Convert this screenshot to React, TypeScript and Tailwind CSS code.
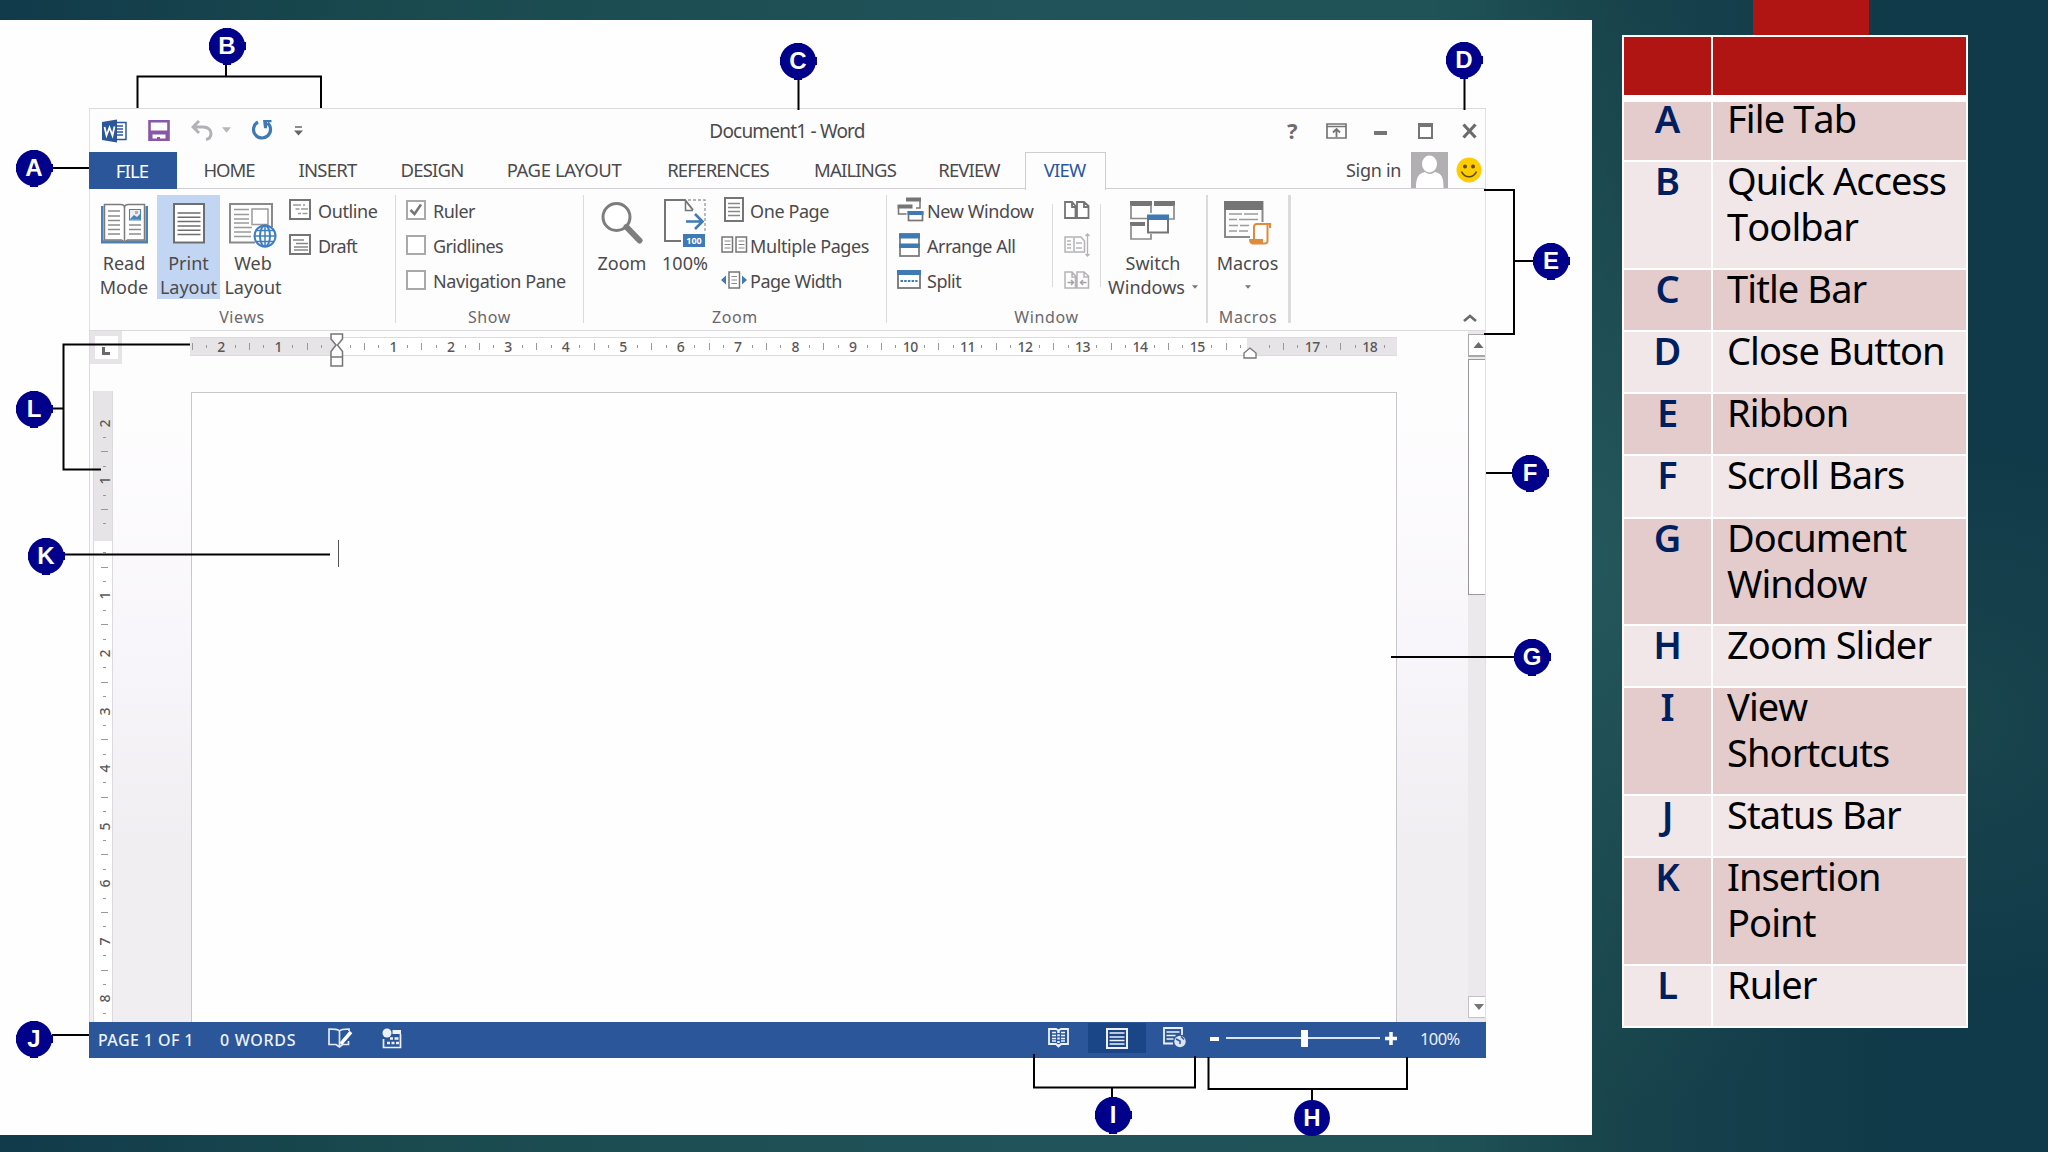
import type { ReactNode } from 'react'

const legend = [
    { letter: 'A', lines: ['File Tab'], height: 'h-[60px]' },
    { letter: 'B', lines: ['Quick Access', 'Toolbar'], height: 'h-[108px]' },
    { letter: 'C', lines: ['Title Bar'], height: 'h-[62px]' },
    { letter: 'D', lines: ['Close Button'], height: 'h-[62px]' },
    { letter: 'E', lines: ['Ribbon'], height: 'h-[62px]' },
    { letter: 'F', lines: ['Scroll Bars'], height: 'h-[63px]' },
    { letter: 'G', lines: ['Document', 'Window'], height: 'h-[107px]' },
    { letter: 'H', lines: ['Zoom Slider'], height: 'h-[62px]' },
    { letter: 'I', lines: ['View', 'Shortcuts'], height: 'h-[108px]' },
    { letter: 'J', lines: ['Status Bar'], height: 'h-[62px]' },
    { letter: 'K', lines: ['Insertion', 'Point'], height: 'h-[108px]' },
    { letter: 'L', lines: ['Ruler'], height: 'h-[62px]' },
]

const badges = [
    { letter: 'A', x: 34, y: 168 },
    { letter: 'B', x: 227, y: 46 },
    { letter: 'C', x: 798, y: 61 },
    { letter: 'D', x: 1464, y: 60 },
    { letter: 'E', x: 1551, y: 261 },
    { letter: 'F', x: 1530, y: 473 },
    { letter: 'G', x: 1532, y: 657 },
    { letter: 'H', x: 1312, y: 1118 },
    { letter: 'I', x: 1113, y: 1115 },
    { letter: 'J', x: 34, y: 1039 },
    { letter: 'K', x: 46, y: 556 },
    { letter: 'L', x: 34, y: 409 },
]

const tabs = [
    { label: 'HOME', className: 'w-[104px] tracking-[-1px]' },
    { label: 'INSERT', className: 'w-[93px] tracking-[-0.8px]' },
    { label: 'DESIGN', className: 'w-[116px] tracking-[-0.8px]' },
    { label: 'PAGE LAYOUT', className: 'w-[148px] tracking-[-0.4px]' },
    { label: 'REFERENCES', className: 'w-[160px] tracking-[-0.8px]' },
    { label: 'MAILINGS', className: 'w-[114px] tracking-[-0.8px]' },
    { label: 'REVIEW', className: 'w-[113px] pl-px tracking-[-0.9px]' },
]

const WordIcon = () => (
    <svg width="25" height="24" viewBox="0 0 25 24">
        <rect x="13" y="3.5" width="11" height="17" fill="#fff" stroke="#2b579a" strokeWidth="1.5" />
        <path d="M15 7h6M15 10h6M15 13h6M15 16h6" stroke="#2b579a" strokeWidth="1.3" />
        <path d="M0 3L15 0.5v23L0 21z" fill="#2b579a" />
        <path d="M2.500 8l2 8.500L7.500 8.500l3 8L12.500 7.500" fill="none" stroke="#fff" strokeWidth="1.8" />
    </svg>
)

const SaveIcon = () => (
    <svg width="22" height="21" viewBox="0 0 22 21">
        <path d="M1.500 1.200h19v18.600h-19z" fill="#fff" stroke="#8757a8" strokeWidth="2.600" />
        <path d="M1 10.500h20v10h-3.500V14.500h-13v6H1z" fill="#8757a8" />
        <path d="M9 17h3v3.500H9z" fill="#8757a8" />
    </svg>
)

const UndoIcon = () => (
    <svg width="23" height="21" viewBox="0 0 23 21">
        <path d="M8 1L2 7l6 6M2 7h10c5 0 8 3 8 6.500S18 19 15 19.500" fill="none" stroke="#b3b1b5" strokeWidth="3" />
    </svg>
)

const RedoIcon = () => (
    <svg width="22" height="21" viewBox="0 0 22 21">
        <path d="M7 3A8.500 8.500 0 1 0 16.500 4" fill="none" stroke="#3f7ab5" strokeWidth="3.200" />
        <path d="M12 1h8.500v2.200h-4.500v6h-3z" fill="#3f7ab5" />
    </svg>
)

const Caret = ({ color = '#777', w = 9 }: { color?: string; w?: number }) => (
    <svg width={w} height="6" viewBox="0 0 10 6">
        <path d="M0 0h10L5 6z" fill={color} />
    </svg>
)

const ReadModeIcon = () => (
    <svg width="47" height="41" viewBox="0 0 47 41">
        <path d="M1 3v36h45V3" fill="none" stroke="#4a82b8" strokeWidth="3" />
        <path d="M3.500 1.500h16c2 0 4 1 4 3 0-2 2-3 4-3h16V37h-17l-3 2-3-2h-17z" fill="#fff" stroke="#7b7b7b" strokeWidth="1.500" />
        <path d="M23.500 4v34" stroke="#7b7b7b" strokeWidth="1.500" />
        <path d="M7 8h12M7 13h12M7 17.500h12M7 22h12M7 26.500h12M7 31h12M28 22h12M28 26.500h12M28 31h12" stroke="#8c8c8c" strokeWidth="1.500" />
        <rect x="28.500" y="6.500" width="11" height="10.500" fill="#e7eef6" stroke="#4a82b8" />
        <path d="M29 16l4-4 3 2 3-3v5.500H29z" fill="#4a82b8" />
        <path d="M34 8h3v3h-3z" fill="#e9a34d" />
    </svg>
)

const PrintLayoutIcon = () => (
    <svg width="32" height="41" viewBox="0 0 32 41">
        <rect x="1" y="1" width="30" height="38.500" fill="#fff" stroke="#6e6e6e" strokeWidth="2" />
        <path d="M4.500 10h23M4.500 14.300h23M4.500 18.600h23M4.500 22.900h23M4.500 27.200h23M4.500 31.500h23" stroke="#6e6e6e" strokeWidth="1.500" />
    </svg>
)

const WebLayoutIcon = () => (
    <svg width="48" height="45" viewBox="0 0 48 45">
        <path d="M43 24V1H1v38.500h25" fill="none" stroke="#8a8a8a" strokeWidth="2" />
        <path d="M5 6.500h15M5 11.500h15M5 16h15M5 20h15M5 24.500h18M5 29h17M5 33.500h17" stroke="#9a9a9a" strokeWidth="1.500" />
        <rect x="23" y="6" width="16" height="15.500" fill="#fff" stroke="#9a9a9a" strokeWidth="1.500" />
        <g fill="none" stroke="#3f7fc0" strokeWidth="2">
            <circle cx="36" cy="33" r="10.500" fill="#fff" />
            <ellipse cx="36" cy="33" rx="5" ry="10.500" />
            <path d="M36 22.500v21M25.500 33h21M27.500 27.500h17M27.500 38.500h17" strokeWidth="1.500" />
        </g>
    </svg>
)

const OutlineIcon = () => (
    <svg width="22" height="21" viewBox="0 0 22 21">
        <rect x="1" y="1" width="20" height="19" fill="#fff" stroke="#757575" strokeWidth="2" />
        <path d="M4 6h8M6.500 10h4M12 10h7M9 14.500h3M13.500 14.500h5M14 6h2" stroke="#999" strokeWidth="1.300" />
    </svg>
)

const DraftIcon = () => (
    <svg width="22" height="21" viewBox="0 0 22 21">
        <rect x="1" y="1" width="20" height="19" fill="#fff" stroke="#757575" strokeWidth="2" />
        <path d="M4 6h11M7 9.500h12M5 13h14M5 16h14" stroke="#888" strokeWidth="1.300" />
    </svg>
)

const ZoomIcon = () => (
    <svg width="42" height="43" viewBox="0 0 42 43">
        <circle cx="15.500" cy="16" r="13.500" fill="#fff" stroke="#7d7d7d" strokeWidth="3" />
        <path d="M25.500 26L38.500 39.500" stroke="#7d7d7d" strokeWidth="6" strokeLinecap="round" />
    </svg>
)

const HundredIcon = () => (
    <svg width="42" height="48" viewBox="0 0 42 48">
        <path d="M17 42H1V1h20l8 10" fill="none" stroke="#757575" strokeWidth="2" />
        <path d="M21.500 1v10.500H29" fill="none" stroke="#757575" strokeWidth="1.500" />
        <path d="M24 1h17v33" fill="none" stroke="#9a9a9a" strokeWidth="1.300" strokeDasharray="3 2" />
        <path d="M22 22.500h15M31 15l7.500 7.500L31 30" fill="none" stroke="#3f7ab5" strokeWidth="2.600" />
        <rect x="19" y="35" width="22" height="13" fill="#3f7ab5" />
        <text x="30" y="45" fill="#fff" fontSize="9" fontWeight="700" textAnchor="middle">100</text>
    </svg>
)

const OnePageIcon = () => (
    <svg width="27" height="25" viewBox="0 0 27 25">
        <rect x="4" y="1" width="18" height="23" fill="#fff" stroke="#757575" strokeWidth="2" />
        <path d="M7 6.500h12M7 10.500h12M7 14.500h12M7 18.500h12" stroke="#888" strokeWidth="1.300" />
    </svg>
)

const MultiPageIcon = () => (
    <svg width="27" height="17" viewBox="0 0 27 17">
        <path d="M1 1h10.500v15H1zM15 1h10.500v15H15z" fill="#fff" stroke="#757575" strokeWidth="1.500" />
        <path d="M3.500 5h6M3.500 8.500h6M3.500 12h6M17.500 5h6M17.500 8.500h6M17.500 12h6" stroke="#888" strokeWidth="1.200" />
    </svg>
)

const PageWidthIcon = () => (
    <svg width="27" height="18" viewBox="0 0 27 18">
        <path d="M5 4.500v9L0 9zM21 4.500v9L26 9z" fill="#3f7ab5" />
        <rect x="8" y="1" width="10.500" height="16" fill="#fff" stroke="#757575" strokeWidth="1.500" />
        <path d="M10.500 5.500h5.500M10.500 9h5.500M10.500 12.500h5.500" stroke="#888" strokeWidth="1.200" />
    </svg>
)

const NewWindowIcon = () => (
    <svg width="27" height="25" viewBox="0 0 27 25">
        <path d="M9 0.500h15v4H9zM0.500 7.500h15v4H0.500z" fill="#757575" />
        <path d="M23 4v7h-4M1.500 11v6h8" fill="none" stroke="#757575" strokeWidth="1.500" />
        <rect x="11.500" y="15" width="14" height="8.500" fill="#fff" stroke="#757575" strokeWidth="1.700" />
        <path d="M10.500 14h16v4h-16z" fill="#3f7ab5" />
    </svg>
)

const ArrangeIcon = () => (
    <svg width="27" height="24" viewBox="0 0 27 24">
        <rect x="3" y="1" width="19" height="22" fill="#fff" stroke="#757575" strokeWidth="1.700" />
        <path d="M2 0.500h21v5H2zM2 10.500h21v4.500H2z" fill="#3f7ab5" />
    </svg>
)

const SplitIcon = () => (
    <svg width="27" height="19" viewBox="0 0 27 19">
        <rect x="1" y="1" width="22" height="17" fill="#fff" stroke="#757575" strokeWidth="1.800" />
        <path d="M0 0h24v5H0z" fill="#3f7ab5" />
        <path d="M3.500 11h17" stroke="#3f7ab5" strokeWidth="1.800" strokeDasharray="2.500 1.200" />
    </svg>
)

const SideBySideIcon = () => (
    <svg width="26" height="18" viewBox="0 0 26 18">
        <path d="M1 1h7l3.500 4v12H1zM13 1h7l4.500 4v12H13zM8 1v5h3.500M20 1v5h4.500" fill="#fff" stroke="#757575" strokeWidth="1.800" />
    </svg>
)

const SyncScrollIcon = () => (
    <svg width="26" height="24" viewBox="0 0 26 24">
        <path d="M9 4H1v15h8M10 4h7l3.500 4v11H10z" fill="none" stroke="#b4b2b5" strokeWidth="1.500" />
        <path d="M3 8h4M3 11.500h4M3 15h4M12 10h6M12 15h6" stroke="#b4b2b5" strokeWidth="1.300" />
        <path d="M23.500 1v22M21.500 3l2-2 2 2M21.500 21l2 2 2-2" fill="none" stroke="#b4b2b5" strokeWidth="1.300" />
    </svg>
)

const ResetIcon = () => (
    <svg width="26" height="18" viewBox="0 0 26 18">
        <path d="M1 1h7l3.500 4v12H1zM13 1h7l4.500 4v12H13zM8 1v5h3.500M20 1v5h4.500" fill="none" stroke="#b4b2b5" strokeWidth="1.500" />
        <path d="M3.500 11.500h6M7 9l2.500 2.500L7 14M22.500 11.500h-6M19 9l-2.500 2.500L19 14" fill="none" stroke="#a4a2a5" strokeWidth="1.500" />
    </svg>
)

const SwitchIcon = () => (
    <svg width="46" height="40" viewBox="0 0 46 40">
        <path d="M0 0h22v5H0zM24 0h21v5H24zM0 21h15v4H0z" fill="#757575" />
        <path d="M1 4v13.500h16M21 4v8M44 4v14h-5M1 24v14h20v-5" fill="none" stroke="#8a8a8a" strokeWidth="1.700" />
        <rect x="18" y="15" width="20" height="16.500" fill="#fff" stroke="#757575" strokeWidth="2" />
        <path d="M17 13.500h22V19H17z" fill="#3f7ab5" />
    </svg>
)

const MacrosIcon = () => (
    <svg width="48" height="44" viewBox="0 0 48 44">
        <path d="M26 36H1V1h37.500v20" fill="none" stroke="#8a8a8a" strokeWidth="2" />
        <path d="M0 0h39v9H0z" fill="#757575" />
        <path d="M5 13h13M20 13h14M5 18.500h8M15 18.500h19M5 24.500h9M16 24.500h9M5 30h8M15 30h9" stroke="#9a9a9a" strokeWidth="1.500" />
        <path d="M30 39V26c0-2 1-3 3-3h13v4M43.500 24v16c0 2-1 2.500-3 2.500H28" fill="#fff" stroke="#e08a3c" strokeWidth="2" />
        <path d="M25 38h14v5H28c-2 0-3-2-3-5z" fill="#e08a3c" />
    </svg>
)

const Avatar = () => (
    <svg width="37" height="36" viewBox="0 0 37 36">
        <path d="M0 0h37v36H0z" fill="#b1afb2" />
        <ellipse cx="18.500" cy="12" rx="7.500" ry="8.500" fill="#fff" />
        <path d="M5 36c0-10 2-14.500 9-16 3 2.500 7 2.500 10 0 7 1.500 8.500 6 8.500 16z" fill="#fff" />
    </svg>
)

const Smiley = () => (
    <svg width="26" height="26" viewBox="0 0 26 26">
        <circle cx="13" cy="13" r="12.500" fill="#fc0" />
        <circle cx="9" cy="9.500" r="2" fill="#5b4a1f" />
        <circle cx="17" cy="9.500" r="2" fill="#5b4a1f" />
        <path d="M5.500 14.500c3 7 12 7 15 0" fill="none" stroke="#5b4a1f" strokeWidth="1.700" />
    </svg>
)

const TitleBar = () => (
    <div className="relative flex h-[43px] items-center">
        <div className="ml-[13px] w-[46px]"><WordIcon /></div>
        <div className="w-[43px]"><SaveIcon /></div>
        <div className="w-[31px]"><UndoIcon /></div>
        <div className="mb-[2px] w-[29px]"><Caret color="#b9b7bb" /></div>
        <div className="mb-[2px] w-[43px]"><RedoIcon /></div>
        <svg width="9" height="10" viewBox="0 0 9 10">
            <path d="M1 1h7" stroke="#666" strokeWidth="1.500" />
            <path d="M0 4.500h9L4.500 9.500z" fill="#666" />
        </svg>
        <div className="mt-[2px] ml-[406px] w-[156px] text-center text-[19px] tracking-[-0.8px] whitespace-nowrap text-[#4b4a4c]">Document1 - Word</div>
        <div className="ml-[422px] w-[42px] text-[22px] font-bold text-[#6d6b6e]">?</div>
        <svg className="ml-[-3px]" width="21" height="16" viewBox="0 0 21 16">
            <path d="M1 1h19v14H1zM1 3.500h19" fill="none" stroke="#757575" strokeWidth="1.700" />
            <path d="M10.500 14V6M7 9.500L10.500 6 14 9.500" fill="none" stroke="#757575" strokeWidth="1.800" />
        </svg>
        <div className="mt-[4px] ml-[27px] h-[4px] w-[13px] bg-[#757575]" />
        <div className="ml-[31px] h-[16px] w-[15px] border-2 border-t-4 border-[#757575]" />
        <svg className="ml-[29px]" width="15" height="16" viewBox="0 0 15 16">
            <path d="M1.500 1.500l12 13M13.500 1.500l-12 13" stroke="#6b6b6b" strokeWidth="3.200" />
        </svg>
    </div>
)

const TabStrip = () => (
    <div className="flex h-[37px] text-[18.5px] text-[#4b4a4c]">
        <div className="flex w-[88px] items-center justify-center bg-[#2b579a] pr-[2px] tracking-[-0.8px] text-white">FILE</div>
        <div className="flex flex-1 items-center border-b border-[#d0ced2]">
            {tabs.map(tab => (
                <div key={tab.label} className={`text-center whitespace-nowrap ${tab.className}`}>{tab.label}</div>
            ))}
            <div className="relative top-px flex h-[38px] w-[81px] items-center justify-center border border-b-0 border-[#d0ced2] bg-[#fefdfe] pr-[2px] pb-[3px] tracking-[-0.8px] text-[#2b579a]">VIEW</div>
            <div className="ml-[240px] w-[65px] text-[18px] tracking-[-0.3px] whitespace-nowrap">Sign in</div>
            <Avatar />
            <div className="ml-[8px]"><Smiley /></div>
        </div>
    </div>
)

const Group = ({ label, className, children }: { label: string; className: string; children: ReactNode }) => (
    <div className={`flex h-[128px] flex-col justify-between ${className}`}>
        <div className="flex">{children}</div>
        <div className="h-[18px] text-center text-[16px] leading-[25px] tracking-[0.6px] text-[#6a686c]">{label}</div>
    </div>
)

const BigButton = ({ icon, className, children }: { icon: ReactNode; className: string; children: ReactNode }) => (
    <div className={`flex h-[104px] flex-col items-center pt-[6px] ${className}`}>
        <div className="flex h-[50px] items-start">{icon}</div>
        <div className="text-center text-[18px] leading-[24px] whitespace-nowrap">{children}</div>
    </div>
)

const SmallRow = ({ icon, label, className = '' }: { icon: ReactNode; label: string; className?: string }) => (
    <div className={`flex h-[35px] items-center whitespace-nowrap text-[18px] ${className}`}>
        {icon}
        <span className="mt-[3px]">{label}</span>
    </div>
)

const CheckBox = ({ checked = false }: { checked?: boolean }) => (
    <div className="mr-[7px] flex size-[20px] items-center justify-center border-2 border-[#aaa8ab] bg-white">
        {checked && (
            <svg width="14" height="13" viewBox="0 0 14 13">
                <path d="M1.500 7l4 4L12 1.500" fill="none" stroke="#757575" strokeWidth="2.500" />
            </svg>
        )}
    </div>
)

const Ribbon = () => (
    <div className="flex h-[142px] border-b border-[#dcdadd] pt-[6px] text-[#4b4a4c]">
        <Group label="Views" className="w-[307px] border-r border-[#dcdadd]">
            <BigButton icon={<div className="mt-[2px]"><ReadModeIcon /></div>} className="ml-[4px] w-[62px]">Read<br />Mode</BigButton>
            <BigButton icon={<div className="mt-[2px]"><PrintLayoutIcon /></div>} className="ml-[2px] w-[63px] bg-[#c2d5f2]">Print<br />Layout</BigButton>
            <BigButton icon={<div className="mt-[2px]"><WebLayoutIcon /></div>} className="w-[66px]">Web<br />Layout</BigButton>
            <div className="mt-[-3px] ml-[3px]">
                <SmallRow icon={<div className="mr-[7px]"><OutlineIcon /></div>} label="Outline" className="tracking-[-0.4px]" />
                <SmallRow icon={<div className="mr-[7px]"><DraftIcon /></div>} label="Draft" className="tracking-[-0.8px]" />
            </div>
        </Group>
        <Group label="Show" className="w-[188px] border-r border-[#dcdadd]">
            <div className="mt-[-3px] ml-[10px]">
                <SmallRow icon={<CheckBox checked />} label="Ruler" className="tracking-[-0.5px]" />
                <SmallRow icon={<CheckBox />} label="Gridlines" className="tracking-[-0.6px]" />
                <SmallRow icon={<CheckBox />} label="Navigation Pane" className="tracking-[-0.4px]" />
            </div>
        </Group>
        <Group label="Zoom" className="w-[303px] border-r border-[#dcdadd]">
            <BigButton icon={<ZoomIcon />} className="ml-[8px] w-[60px]">Zoom</BigButton>
            <BigButton icon={<div className="mt-[-2px]"><HundredIcon /></div>} className="ml-[2px] w-[62px]">100%</BigButton>
            <div className="mt-[-3px] ml-[5px]">
                <SmallRow icon={<div className="mr-[2px]"><OnePageIcon /></div>} label="One Page" className="tracking-[-0.4px]" />
                <SmallRow icon={<div className="mr-[2px]"><MultiPageIcon /></div>} label="Multiple Pages" className="tracking-[-0.4px]" />
                <SmallRow icon={<div className="mr-[2px]"><PageWidthIcon /></div>} label="Page Width" className="tracking-[-0.5px]" />
            </div>
        </Group>
        <Group label="Window" className="w-[321px] border-r-2 border-[#dcdadd]">
            <div className="mt-[-3px] ml-[10px] w-[155px]">
                <SmallRow icon={<div className="mr-[3px]"><NewWindowIcon /></div>} label="New Window" className="tracking-[-0.4px]" />
                <SmallRow icon={<div className="mr-[3px]"><ArrangeIcon /></div>} label="Arrange All" className="tracking-[-0.5px]" />
                <SmallRow icon={<div className="mr-[3px]"><SplitIcon /></div>} label="Split" className="tracking-[-0.5px]" />
            </div>
            <div className="mt-[9px] flex h-[83px] w-[49px] flex-col items-center justify-between border-x border-[#dcdadd]">
                <div className="mt-[-3px]"><SideBySideIcon /></div>
                <SyncScrollIcon />
                <div className="mb-[-2px]"><ResetIcon /></div>
            </div>
            <BigButton icon={<SwitchIcon />} className="ml-[7px] w-[90px]">
                Switch<br />
                <span className="flex items-center gap-[7px]">Windows <Caret w={6} /></span>
            </BigButton>
        </Group>
        <Group label="Macros" className="w-[83px] border-r-3 border-[#dcdadd]">
            <BigButton icon={<MacrosIcon />} className="w-[79px]">
                Macros<br />
                <span className="flex h-[24px] items-center justify-center"><Caret w={6} /></span>
            </BigButton>
        </Group>
        <svg className="mt-[119px] ml-[172px]" width="14" height="8" viewBox="0 0 14 8">
            <path d="M1 7l6-5 6 5" fill="none" stroke="#6b6b6b" strokeWidth="2.600" />
        </svg>
    </div>
)

// Four marks per centimetre: dot, half tick, dot, number
const Mark = ({ k, vertical = false }: { k: number; vertical?: boolean }) => {
    if (k % 4 === 0) {
        const n = Math.abs(k / 4)
        return <span>{n === 0 || (n === 16 && !vertical) ? '' : n}</span>
    }
    return <i className={k % 2 === 0 ? 'block h-[7px] w-px bg-[#99979b]' : 'block h-[3px] w-px bg-[#99979b]'} />
}

const HorizontalRuler = () => (
    <div className="relative flex h-[60px] items-start pt-[6px]">
        <div className="mt-[-6px] flex h-[33px] w-[32px] items-center justify-center bg-[#e6e4e7]">
            <div className="flex size-[23px] items-center justify-center bg-white">
                <div className="mt-[6px] size-[8px] border-b-3 border-l-3 border-[#6b696c]" />
            </div>
        </div>
        <div className="ml-[68px] flex h-[19px] w-[1207px] items-center overflow-hidden border-y border-[#dcdadd] bg-[linear-gradient(90deg,#e6e4e7_0_146px,#fff_146px_1057px,#e6e4e7_1057px)]">
            <div className="ml-[-5px] flex">
                {Array.from({ length: 84 }, (_, i) => (
                    <div key={i} className="flex h-[18px] w-[14.37px] shrink-0 items-center justify-center text-[14px] font-medium tracking-[-0.5px] text-[#59575a]">
                        <Mark k={i - 10} />
                    </div>
                ))}
            </div>
        </div>
        <svg className="absolute top-[2px] left-[240px]" width="14" height="34" viewBox="0 0 14 34">
            <path d="M1 1h11.500v5L7.500 12l5 6.500V33H1V18.500L6 12 1 6zM1 24h11.500" fill="#fff" stroke="#757575" strokeWidth="1.500" />
        </svg>
        <svg className="absolute top-[16px] left-[1153px]" width="14" height="12" viewBox="0 0 14 12">
            <path d="M1 11V6l6-5 6 5v5z" fill="#fff" stroke="#757575" strokeWidth="1.300" />
        </svg>
    </div>
)

const VerticalRuler = () => (
    <div className="h-full w-[20px] overflow-hidden border-x border-[#dcdadd] bg-[linear-gradient(180deg,#e6e4e7_0_150px,#fff_150px)] pt-[25px]">
        {Array.from({ length: 42 }, (_, i) => (
            <div key={i} className="flex h-[14.4px] items-center justify-center pl-[2px] text-[14px] font-medium text-[#59575a]">
                <div className="-rotate-90"><Mark k={i - 8} vertical /></div>
            </div>
        ))}
    </div>
)

const ScrollBar = () => (
    <div className="flex w-[18px] flex-col border-r border-[#e2e0e3] bg-[#ebe9ec] pt-[3px] pb-[4px]">
        <div className="flex h-[23px] items-center justify-center border border-r-0 border-b-2 border-[#aaa8ab] bg-white pl-[3px]">
            <svg width="11" height="6" viewBox="0 0 10 6"><path d="M0 6h10L5 0z" fill="#6b6b6b" /></svg>
        </div>
        <div className="mt-[2px] h-[236px] border border-r-0 border-[#99979b] bg-white" />
        <div className="mt-auto flex h-[22px] items-center justify-center border border-r-0 border-[#c4c2c5] bg-white pl-[3px]">
            <Caret w={12} color="#757575" />
        </div>
    </div>
)

const StatusBar = () => (
    <div className="flex h-[36px] items-center bg-[#2b579a] text-[16px] text-[#eef2f8]">
        <div className="ml-[9px] w-[122px] font-medium tracking-[0.4px] whitespace-nowrap">PAGE 1 OF 1</div>
        <div className="w-[108px] font-medium tracking-[0.7px] whitespace-nowrap">0 WORDS</div>
        <svg className="mt-[-4px]" width="25" height="20" viewBox="0 0 25 20">
            <path d="M11.500 3C10 1 7 1 1 1v15.500h7l3.500 2.500 3-2.500h6V13M11.500 3v15M11.500 3C13 1 16 1 21 1v2" fill="none" stroke="#e3eaf4" strokeWidth="1.700" />
            <path d="M23 4l-7 8-3 4" stroke="#fff" strokeWidth="3.500" />
        </svg>
        <svg className="mt-[-3px] ml-[29px]" width="20" height="21" viewBox="0 0 20 21">
            <circle cx="5" cy="5" r="4.500" fill="#eef2f8" />
            <path d="M10.500 2h8.500v4h-8.500z" fill="#eef2f8" />
            <path d="M1.500 11v8.500h17V6" fill="none" stroke="#eef2f8" strokeWidth="1.700" />
            <path d="M8 10.500h3M12.500 10.500h4M5 15h3M9.500 15h3M14 15h3" stroke="#eef2f8" strokeWidth="2.500" />
        </svg>
        <svg className="mt-[-5px] ml-[646px]" width="21" height="21" viewBox="0 0 21 21">
            <path d="M1 2h7l2.500 1.500L13 2h7v15h-7l-2.500 2.500L8 17H1z" fill="none" stroke="#eef2f8" strokeWidth="1.800" />
            <path d="M4 5.500h4M4 8.500h4M4 11.500h4M4 14h4M13 5.500h4M13 8.500h4M13 11.500h4M13 14h4" stroke="#eef2f8" strokeWidth="1.500" />
            <path d="M10.500 4v14" stroke="#eef2f8" strokeWidth="2.500" strokeDasharray="2 1.300" />
        </svg>
        <div className="mb-[4px] ml-[19px] flex h-[30px] w-[58px] items-center justify-center bg-[#1a4688] pt-px">
            <svg width="22" height="21" viewBox="0 0 22 21">
                <path d="M1 1h20v19H1z" fill="none" stroke="#eef2f8" strokeWidth="2" />
                <path d="M3.500 5h15M3.500 9h15M3.500 12.500h15M3.500 16h15" stroke="#eef2f8" strokeWidth="1.700" />
            </svg>
        </div>
        <svg className="mt-[-5px] ml-[17px]" width="24" height="21" viewBox="0 0 24 21">
            <path d="M19 8V1H1v15.500h9" fill="none" stroke="#eef2f8" strokeWidth="1.800" />
            <path d="M3.500 5h13M3.500 8.500h9M3.500 12h7" stroke="#eef2f8" strokeWidth="1.700" />
            <circle cx="17" cy="14.500" r="5.700" fill="#dbe5f2" />
            <path d="M13 12l4 2v3M18 9.500l3 3" stroke="#2b579a" strokeWidth="1.500" fill="none" />
        </svg>
        <div className="mb-[2px] ml-[23px] h-[4px] w-[9px] bg-white" />
        <div className="mb-[4px] ml-[7px] flex h-[17px] w-[154px] items-center">
            <div className="h-[2px] w-[75px] bg-[#dbe5f2]" />
            <div className="h-[17px] w-[7px] bg-white" />
            <div className="h-[2px] flex-1 bg-[#dbe5f2]" />
        </div>
        <svg className="mb-[3px] ml-[5px]" width="12" height="13" viewBox="0 0 12 13">
            <path d="M6 0v13M0 6.500h12" stroke="#fff" strokeWidth="3.500" />
        </svg>
        <div className="mb-[2px] ml-[23px] text-[16.5px] tracking-[-0.6px]">100%</div>
    </div>
)

const WordWindow = () => (
    <div className="h-[950px] w-[1397px] border-t border-[#dcdadd] bg-[#fefdfe]">
        <div className="shadow-[inset_-1px_0_#e2e0e3,inset_1px_0_#e2e0e3]">
            <TitleBar />
            <TabStrip />
            <Ribbon />
        </div>
        <div className="flex h-[691px] bg-[linear-gradient(180deg,#fefdfe_12%,#f8f6fa_45%,#f0eef1_75%)]">
            <div className="flex w-[1379px] flex-col border-l border-[#dcdadd]">
                <HorizontalRuler />
                <div className="flex min-h-0 flex-1 pl-[3px]">
                    <VerticalRuler />
                    <div className="mt-[1px] ml-[78px] w-[1206px] border border-b-0 border-[#c9c7cb] bg-[#fefefe]">
                        <div className="mt-[147px] ml-[146px] h-[27px] w-px bg-[#555]" />
                    </div>
                </div>
            </div>
            <ScrollBar />
        </div>
        <StatusBar />
    </div>
)

const Callouts = () => (
    <div className="absolute inset-0">
        <svg className="absolute inset-0" width="1592" height="1152" viewBox="0 0 1592 1152" fill="none" stroke="#000" strokeWidth="2">
            <path d="M52 168H89" />
            <path d="M226 62V76M137.500 108V76.500H321V108" />
            <path d="M798.500 78V110M1464.500 78V110" />
            <path d="M1484 190H1514V334H1484M1514 261H1534" />
            <path d="M1486 473H1514M1391 657H1514" />
            <path d="M62 554.500H330" />
            <path d="M190 344.500H63.500V469.500H101M52 408.500H63" />
            <path d="M52 1035H89" />
            <path d="M1034 1054V1087.500H1195V1056M1112 1087V1098" />
            <path d="M1208.500 1057V1089H1407V1057M1312 1089V1102" />
            {badges.filter(b => b.letter !== 'H').map(b => (
                <path key={b.letter} d={`M${b.x - 18} ${b.y}h37M${b.x} ${b.y - 18}v37`} stroke="#00008b" strokeWidth="8" />
            ))}
        </svg>
        {badges.map(b => (
            <div
                key={b.letter}
                className="absolute flex size-[36px] items-center justify-center rounded-full bg-[#00008b] font-['Liberation_Sans'] text-[24px] font-bold text-white"
                style={{ left: b.x - 18, top: b.y - 18 }}
            >
                {b.letter}
            </div>
        ))}
    </div>
)

const Legend = () => (
    <div className="ml-[30px] w-[346px]">
        <div className="ml-[131px] h-[35px] w-[116px] bg-[#b01513]" />
        <div className="border-2 border-b-0 border-white">
            <div className="flex h-[65px] gap-[2px] border-b-7 border-white bg-white">
                <div className="w-[87px] bg-[#b01513]" />
                <div className="flex-1 bg-[#b01513]" />
            </div>
            {legend.map((row, i) => (
                <div key={row.letter} className={`flex gap-[2px] border-b-2 border-white bg-white text-[38px] leading-[46px] ${row.height}`}>
                    <div className={`w-[87px] text-center font-semibold text-[#001f60] ${i % 2 ? 'bg-[#f2e7e8]' : 'bg-[#e4cbcc]'}`}>
                        <div className={i ? 'mt-[-5px]' : 'mt-[-7px]'}>{row.letter}</div>
                    </div>
                    <div className={`flex-1 pl-[14px] tracking-[-0.9px] whitespace-nowrap text-black [font-kerning:none] ${i % 2 ? 'bg-[#f2e7e8]' : 'bg-[#e4cbcc]'}`}>
                        <div className={i ? 'mt-[-5px]' : 'mt-[-7px]'}>
                            {row.lines.map(line => <div key={line}>{line}</div>)}
                        </div>
                    </div>
                </div>
            ))}
        </div>
    </div>
)

export default function App() {
    return (
        <div className="relative flex h-[1152px] w-[2048px] items-start overflow-hidden bg-[radial-gradient(ellipse_380px_560px_at_1590px_560px,#24575b_0%,#22535899_45%,transparent_100%),radial-gradient(ellipse_320px_300px_at_1960px_720px,#19454d_0%,transparent_100%),linear-gradient(90deg,#113a4a_0%,#1a4a4e_20%,#20535a_50%,#1f5358_70%,#18434b_79%,#153f4b_84%,#103949_94%)] font-['Noto_Sans',sans-serif]">
            <div className="mt-[20px] h-[1115px] w-[1592px] bg-[#fefefe] pt-[88px] pl-[89px]">
                <WordWindow />
            </div>
            <Legend />
            <Callouts />
        </div>
    )
}
